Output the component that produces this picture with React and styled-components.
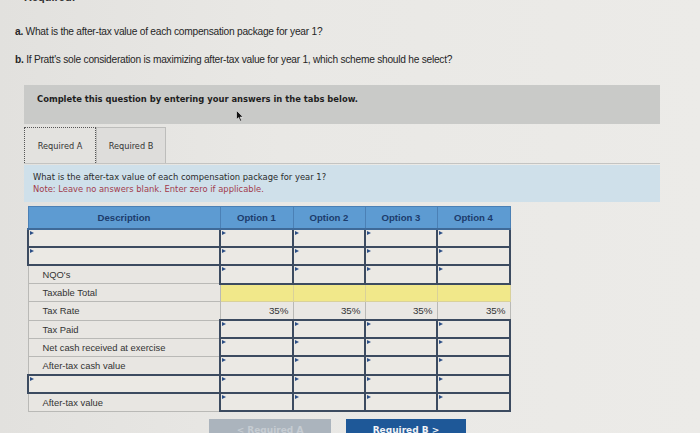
import React from 'react';
import styled, {createGlobalStyle} from 'styled-components';

const Global = createGlobalStyle`
    html, body {
        margin: 0;
        padding: 0;
        background: #e7e6e3;
        overflow: hidden;
    }
`;

const Page = styled.div`
    width: 700px;
    height: 433px;
    overflow: hidden;
    padding-left: 24px;
    box-sizing: border-box;
    background: linear-gradient(90deg, #e2e1de 0%, #e9e8e5 40%, #ecebe8 100%);
    font-family: "Liberation Sans", Arial, sans-serif;
    color: #222;
`;

const CutHeading = styled.div`
    margin-top: -9px;
    font-size: 11px;
    line-height: 12px;
    font-weight: bold;
    color: #333;
`;

const Question = styled.p`
    margin: ${p => p.$top}px 0 0 -9px;
    font-size: 10.2px;
    line-height: 14px;
    letter-spacing: -0.25px;
    color: #262626;
    b {
        font-weight: bold;
    }
`;

const Banner = styled.div`
    margin-top: 18px;
    width: 636px;
    height: 39px;
    box-sizing: border-box;
    padding: 9px 0 0 13px;
    background: #c9cac8;
    font-family: "DejaVu Sans", Verdana, sans-serif;
    font-weight: bold;
    font-size: 8.4px;
    line-height: 11px;
    color: #1e1e1e;
    position: relative;
`;

const Cursor = styled.svg`
    position: absolute;
    left: 212px;
    top: 25px;
`;

const TabBar = styled.div`
    margin-top: 3px;
    width: 636px;
    display: flex;
    border-bottom: 1px solid #c4c4c2;
`;

const Tab = styled.div`
    width: ${p => p.$w}px;
    height: 36px;
    box-sizing: border-box;
    display: flex;
    align-items: center;
    justify-content: center;
    font-family: "DejaVu Sans", Verdana, sans-serif;
    font-size: 8.2px;
    color: #333;
    background: ${p => (p.$active ? '#e3e2df' : '#dedddb')};
    border: ${p => (p.$active ? '1.5px dotted #555' : '1px solid #bdbdbb')};
    border-bottom: none;
`;

const Info = styled.div`
    margin-top: 1px;
    width: 636px;
    box-sizing: border-box;
    padding: 6px 0 7px 9px;
    background: #cfe0ea;
    font-family: "DejaVu Sans", Verdana, sans-serif;
    font-size: 8.4px;
    line-height: 12px;
    color: #2a2a2a;
`;

const Note = styled.div`
    color: #a23b4c;
`;

const Table = styled.table`
    margin: 4px 0 0 3px;
    border-collapse: collapse;
    width: 482px;
    table-layout: fixed;
    font-size: 9.4px;
`;

const HeadCell = styled.th`
    height: 21px;
    padding: 0;
    background: #5d9bd2;
    color: #1c3c6c;
    font-weight: bold;
    font-size: 9.6px;
    border: 1px solid #4b80b5;
    border-bottom: 2px solid #3f6a99;
`;

const LabelCell = styled.td`
    height: 17px;
    padding: 0 0 0 14px;
    border: 1px solid #b9b9b6;
    background: #e8e6e2;
    color: #333;
    white-space: nowrap;
`;

const InputCell = styled.td`
    position: relative;
    height: 16px;
    padding: 0;
    border: 2px solid #3c4b60;
    background: ${p => (p.$yellow ? '#f1e88a' : '#ebe9e4')};
    ${p => p.$yellow && 'border: 1px solid #d9d19a;'}

    &::before {
        content: ${p => (p.$yellow ? 'none' : "''")};
        position: absolute;
        left: 1px;
        top: 1px;
        border-left: 4px solid #2c4f86;
        border-top: 2.5px solid transparent;
        border-bottom: 2.5px solid transparent;
    }
`;

const ValueCell = styled.td`
    height: 17px;
    padding: 0 4px 0 0;
    text-align: right;
    border: 1px solid #b9b9b6;
    background: #e9e7e3;
    color: #333;
    font-size: 9.8px;
`;

const Buttons = styled.div`
    margin-top: 7px;
    display: flex;
    gap: 15px;
    padding-left: 185px;
`;

const NavButton = styled.div`
    width: ${p => p.$w}px;
    height: 24px;
    display: flex;
    justify-content: center;
    align-items: flex-start;
    gap: 6px;
    background: ${p => (p.$primary ? '#1e5898' : '#abb4bd')};
    color: ${p => (p.$primary ? '#f2f4f7' : '#c6ccd2')};
    font-family: "DejaVu Sans", Verdana, sans-serif;
    font-size: 9px;
    font-weight: bold;
    padding-top: 6px;
    box-sizing: border-box;
`;

const OPTIONS = ['Option 1', 'Option 2', 'Option 3', 'Option 4'];

// kind: input row, yellow total, rate row
const ROWS = [
    {label: null, kind: 'input'},
    {label: null, kind: 'input'},
    {label: "NQO's", kind: 'input'},
    {label: 'Taxable Total', kind: 'yellow'},
    {label: 'Tax Rate', kind: 'rate'},
    {label: 'Tax Paid', kind: 'input'},
    {label: 'Net cash received at exercise', kind: 'input'},
    {label: 'After-tax cash value', kind: 'input'},
    {label: null, kind: 'input'},
    {label: 'After-tax value', kind: 'input'},
];

const Row = ({label, kind}) => (
    <tr>
        {label === null ? <InputCell /> : <LabelCell>{label}</LabelCell>}
        {OPTIONS.map(o => {
            if (kind === 'rate') return <ValueCell key={o}>35%</ValueCell>;
            if (kind === 'yellow') return <InputCell key={o} $yellow />;
            return <InputCell key={o} />;
        })}
    </tr>
);

const App = () => {
    return (
        <Page>
            <Global />
            <CutHeading>Required:</CutHeading>
            <Question $top={22}>
                <b>a.</b> What is the after-tax value of each compensation package for year 1?
            </Question>
            <Question $top={14}>
                <b>b.</b> If Pratt's sole consideration is maximizing after-tax value for year 1, which scheme should he select?
            </Question>
            <Banner>
                Complete this question by entering your answers in the tabs below.
                <Cursor width="8" height="12" viewBox="0 0 8 12">
                    <path d="M0.5 0.5 L0.5 9.5 L2.6 7.6 L4.2 11.2 L5.6 10.6 L4 7.1 L7 7.1 Z" fill="#111" stroke="#eee" strokeWidth="0.6" />
                </Cursor>
            </Banner>
            <TabBar>
                <Tab $w={72} $active>Required A</Tab>
                <Tab $w={70}>Required B</Tab>
            </TabBar>
            <Info>
                What is the after-tax value of each compensation package for year 1?
                <Note>Note: Leave no answers blank. Enter zero if applicable.</Note>
            </Info>
            <Table>
                <colgroup>
                    <col style={{width: 192}} />
                    <col style={{width: 73}} />
                    <col style={{width: 72}} />
                    <col style={{width: 72}} />
                    <col style={{width: 73}} />
                </colgroup>
                <thead>
                    <tr>
                        <HeadCell>Description</HeadCell>
                        {OPTIONS.map(o => <HeadCell key={o}>{o}</HeadCell>)}
                    </tr>
                </thead>
                <tbody>
                    {ROWS.map((r, i) => <Row key={i} {...r} />)}
                </tbody>
            </Table>
            <Buttons>
                <NavButton $w={122}>&lt; Required A</NavButton>
                <NavButton $w={120} $primary>Required B &gt;</NavButton>
            </Buttons>
        </Page>
    );
};

export default App;
